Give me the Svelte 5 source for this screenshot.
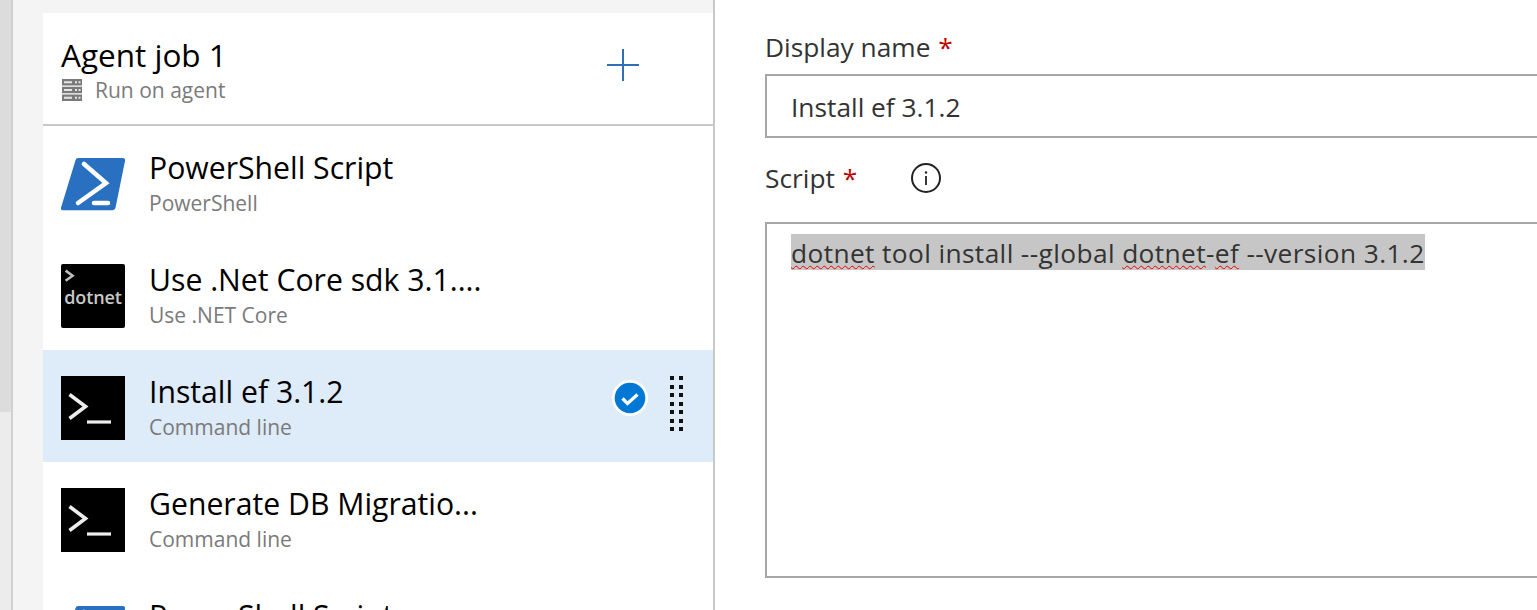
<script>
  const rows = [
    { title: 'PowerShell Script', sub: 'PowerShell', icon: 'ps' },
    { title: 'Use .Net Core sdk 3.1....', sub: 'Use .NET Core', icon: 'dotnet' },
    { title: 'Install ef 3.1.2', sub: 'Command line', icon: 'cmd', selected: true },
    { title: 'Generate DB Migratio...', sub: 'Command line', icon: 'cmd' },
    { title: 'PowerShell Script', sub: 'PowerShell', icon: 'ps' }
  ];
</script>

<div class="page">
  <div class="rail"><div class="rail-top"></div><div class="rail-bottom"></div></div>
  <div class="left">
    <div class="panel">
      <header class="job">
        <div class="job-text">
          <div class="job-title">Agent job 1</div>
          <div class="job-sub">
            <svg class="server" viewBox="0 0 20 22" width="20" height="22">
              <path fill="#7a7a7a" d="M0 0h20v6.4H0zM0 7.8h20v6.4H0zM0 15.6h20V22H0z"/>
              <path fill="#e6e6e6" d="M2 2.2h8v2H2zM13 2.2h2v2h-2zM16.5 2.2h2v2h-2zM2 10h8v2H2zM13 10h2v2h-2zM16.5 10h2v2h-2zM2 17.8h8v2H2zM13 17.8h2v2h-2zM16.5 17.8h2v2h-2z"/>
            </svg>
            <span>Run on agent</span>
          </div>
        </div>
        <svg class="plus" viewBox="0 0 32 32" width="32" height="32">
          <path d="M16 0v32M0 16h32" stroke="#2f6fba" stroke-width="2" fill="none"/>
        </svg>
      </header>
      {#each rows as row}
        <div class="row" class:selected={row.selected}>
          <div class="icon">
            {#if row.icon === 'ps'}
              <svg viewBox="0 0 64 64" width="64" height="64">
                <path fill="#2a70c0" d="M14.500 8.300a3 3 0 0 1 2.800-2.300H62a2.500 2.500 0 0 1 2 3L54.500 55.800a3 3 0 0 1-3 2.400H2a2 2 0 0 1-2-2.400z"/>
                <path d="M23 12l22 19-28 20" stroke="#fff" stroke-width="4.500" fill="none" stroke-linecap="round"/>
                <path d="M33 51h14" stroke="#fff" stroke-width="4.500" stroke-linecap="round"/>
              </svg>
            {:else if row.icon === 'dotnet'}
              <div class="dotnet">
                <svg viewBox="0 0 64 64" width="64" height="64" class="chev">
                  <path d="M4.600 6.600l7 5.100-7 5.100" stroke="#bdbdbd" stroke-width="2.600" fill="none"/>
                </svg>
                <span class="dotnet-word">dotnet</span>
              </div>
            {:else}
              <svg viewBox="0 0 64 64" width="64" height="64">
                <rect width="64" height="64" fill="#000"/>
                <path d="M8.500 18.500L24.500 30.500 8.500 42.500" stroke="#eee" stroke-width="3.600" fill="none"/>
                <path d="M26 46h24" stroke="#eee" stroke-width="3.200"/>
              </svg>
            {/if}
          </div>
          <div class="row-text">
            <div class="row-title">{row.title}</div>
            <div class="row-sub">{row.sub}</div>
          </div>
          {#if row.selected}
            <svg class="check" viewBox="0 0 36 36" width="36" height="36">
              <circle cx="18" cy="18" r="18" fill="#fff"/>
              <circle cx="18" cy="18" r="15.300" fill="#0078d4"/>
              <path d="M10.500 18.500l5 5 10-9" stroke="#fff" stroke-width="3.200" fill="none"/>
            </svg>
            <div class="grip">
              {#each Array(14) as _}<i></i>{/each}
            </div>
          {/if}
        </div>
      {/each}
    </div>
  </div>
  <main class="form">
    <div class="label name-label">Display name <b>*</b></div>
    <div class="field input">Install ef 3.1.2</div>
    <div class="label script-label">
      <span>Script <b>*</b></span>
      <svg class="info" viewBox="0 0 30 30" width="30" height="30">
        <circle cx="15" cy="15" r="14" fill="none" stroke="#222" stroke-width="2"/>
        <path d="M15 13v9" stroke="#222" stroke-width="1.800"/>
        <circle cx="15" cy="9.500" r="1.200" fill="#222"/>
      </svg>
    </div>
    <div class="field area">
      <span class="sel"><u>dotnet</u> tool install --global <u>dotnet</u>-<u>ef</u> --version 3.1.2</span>
    </div>
  </main>
</div>

<style>
  :global(body) { margin: 0; background: #fff; }
  .page {
    width: 1537px; height: 610px; overflow: hidden; display: flex;
    font-family: "Open Sans", "Noto Sans", sans-serif; background: #fff;
  }
  .rail { width: 14px; flex: none; display: flex; flex-direction: column; background: #f4f4f4; }
  .rail-top { height: 412px; width: 11px; background: #dcdcdc; border-right: 2px solid #d0d0d0; }
  .rail-bottom { flex: 1; width: 11px; background: #ececec; border-right: 2px solid #d0d0d0; }
  .left {
    width: 701px; flex: none; background: #f4f4f4; padding: 13px 0 0 29px;
    box-sizing: border-box; border-right: 2px solid #c8c8c8;
  }
  .panel { background: #fff; height: 100%; }
  .job {
    box-sizing: border-box; border-bottom: 2px solid #c8c8c8;
    display: flex; justify-content: space-between; align-items: flex-start; padding: 0 74px 0 18px; height: 113px;
  }
  .job-title { font-size: 31.500px; line-height: 40px; margin-top: 22px; color: #000; }
  .job-sub { display: flex; align-items: center; gap: 13px; color: #7a7a7a; font-size: 21px; line-height: 30px; }
  .server { display: block; margin-left: 1px; }
  .plus { margin-top: 36px; }
  .row { height: 112px; display: flex; align-items: flex-start; padding-left: 18px; position: relative; }
  .row.selected { background: #deebf8; }
  .icon { width: 64px; height: 64px; margin-top: 26px; flex: none; }
  .icon svg { display: block; }
  .dotnet { width: 64px; height: 64px; background: #000; border-radius: 2px; position: relative; overflow: hidden; }
  .dotnet .chev { position: absolute; left: 0; top: 0; }
  .dotnet-word {
    position: absolute; left: 0; right: 0; top: 22px; text-align: center; color: #c8c8c8;
    font-size: 18px; font-weight: 600; line-height: 22px; letter-spacing: -0.100px;
  }
  .row-text { margin-left: 24px; }
  .row-title { font-size: 30.200px; line-height: 40px; color: #000; margin-top: 22px; white-space: nowrap; }
  .row-sub { font-size: 21px; line-height: 30px; color: #7a7a7a; }
  .check { position: absolute; left: 569px; top: 30px; }
  .grip {
    position: absolute; left: 627px; top: 26px; display: grid;
    grid-template-columns: 4px 4px; column-gap: 5px; row-gap: 4.500px;
  }
  .grip i { display: block; width: 4px; height: 4px; background: #111; }
  .form { flex: 1; min-width: 0; padding: 0 0 0 50px; color: #333; }
  .label { font-size: 26.300px; line-height: 36px; color: #333; white-space: nowrap; }
  .label b { font-weight: 400; color: #c00000; margin-left: 1px; }
  .name-label { margin-top: 29px; }
  .script-label { margin-top: 22px; display: flex; align-items: center; gap: 54px; }
  .field {
    width: 1000px; box-sizing: border-box; border: 2px solid #a6a6a6; background: #fff; color: #333;
    font-size: 26.300px; padding-left: 24px; white-space: nowrap;
  }
  .input { height: 64px; margin-top: 9px; line-height: 62px; }
  .area { height: 356px; margin-top: 26px; padding-top: 10px; line-height: 36px; }
  .sel { background: #c6c6c6; display: inline-block; line-height: 38px; height: 36px; letter-spacing: 0.380px; }
  u { text-decoration: underline wavy #f00000 1.300px; text-underline-offset: 2px; text-decoration-skip-ink: none; }
</style>
